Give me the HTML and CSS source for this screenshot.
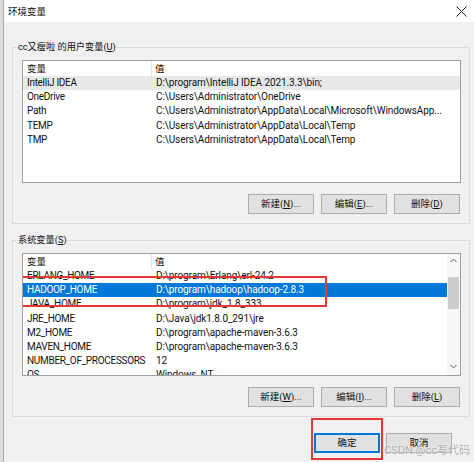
FILE: index.html
```html
<!DOCTYPE html>
<html lang="zh-CN">
<head>
    <meta charset="UTF-8">
    <title>环境变量</title>
    <link rel="stylesheet" href="styles.css">
</head>
<body>
    <div class="screen">
        <div class="edge"></div>
        <div class="dialog">
            <div class="titlebar">
                <span class="title">环境变量</span>
                <svg class="close" width="11" height="11" viewBox="0 0 11 11">
                    <path d="M0.5 0.5 L10.5 10.5 M10.5 0.5 L0.5 10.5" stroke="#222" stroke-width="1" fill="none"/>
                </svg>
            </div>

            <div class="content">
                <!-- 用户变量 -->
                <fieldset class="group">
                    <legend>cc又瘦啦 的用户变量(<u>U</u>)</legend>
                    <div class="list">
                        <div class="list-head">
                            <span class="col-name">变量</span>
                            <span class="col-value">值</span>
                        </div>
                        <div class="row row-soft"><span class="col-name">IntelliJ IDEA</span><span class="col-value">D:\program\IntelliJ IDEA 2021.3.3\bin;</span></div>
                        <div class="row"><span class="col-name">OneDrive</span><span class="col-value">C:\Users\Administrator\OneDrive</span></div>
                        <div class="row"><span class="col-name">Path</span><span class="col-value">C:\Users\Administrator\AppData\Local\Microsoft\WindowsApp...</span></div>
                        <div class="row"><span class="col-name">TEMP</span><span class="col-value">C:\Users\Administrator\AppData\Local\Temp</span></div>
                        <div class="row"><span class="col-name">TMP</span><span class="col-value">C:\Users\Administrator\AppData\Local\Temp</span></div>
                    </div>
                    <div class="buttons">
                        <button class="btn">新建(<u>N</u>)...</button>
                        <button class="btn">编辑(<u>E</u>)...</button>
                        <button class="btn">删除(<u>D</u>)</button>
                    </div>
                </fieldset>

                <!-- 系统变量 -->
                <fieldset class="group group-sys">
                    <legend>系统变量(<u>S</u>)</legend>
                    <div class="list list-scroll">
                        <div class="list-head">
                            <span class="col-name">变量</span>
                            <span class="col-value">值</span>
                        </div>
                        <div class="row"><span class="col-name">ERLANG_HOME</span><span class="col-value">D:\program\Erlang\erl-24.2</span></div>
                        <div class="row row-active"><span class="col-name">HADOOP_HOME</span><span class="col-value">D:\program\hadoop\hadoop-2.8.3</span></div>
                        <div class="row"><span class="col-name">JAVA_HOME</span><span class="col-value">D:\program\jdk_1.8_333</span></div>
                        <div class="row"><span class="col-name">JRE_HOME</span><span class="col-value">D:\Java\jdk1.8.0_291\jre</span></div>
                        <div class="row"><span class="col-name">M2_HOME</span><span class="col-value">D:\program\apache-maven-3.6.3</span></div>
                        <div class="row"><span class="col-name">MAVEN_HOME</span><span class="col-value">D:\program\apache-maven-3.6.3</span></div>
                        <div class="row"><span class="col-name">NUMBER_OF_PROCESSORS</span><span class="col-value">12</span></div>
                        <div class="row"><span class="col-name">OS</span><span class="col-value">Windows_NT</span></div>

                        <div class="scrollbar">
                            <svg class="arrow" width="7" height="5" viewBox="0 0 7 5"><path d="M0.5 4 L3.5 1 L6.5 4" stroke="#606060" fill="none"/></svg>
                            <div class="thumb"></div>
                            <div class="track"></div>
                            <svg class="arrow arrow-down" width="7" height="5" viewBox="0 0 7 5"><path d="M0.5 1 L3.5 4 L6.5 1" stroke="#606060" fill="none"/></svg>
                        </div>
                        <div class="mark mark-row"></div>
                    </div>
                    <div class="buttons">
                        <button class="btn">新建(<u>W</u>)...</button>
                        <button class="btn">编辑(<u>I</u>)...</button>
                        <button class="btn">删除(<u>L</u>)</button>
                    </div>
                </fieldset>

                <div class="footer">
                    <div class="ok-wrap">
                        <button class="btn btn-default">确定</button>
                        <div class="mark mark-ok"></div>
                    </div>
                    <button class="btn">取消</button>
                </div>
            </div>
            <div class="watermark">CSDN @cc写代码</div>
        </div>
    </div>
</body>
</html>
```

FILE: styles.css
```css
body {
    margin: 0;
    background: #f0f0f0;
    font-family: Roboto, 'Noto Sans CJK SC', sans-serif;
    font-size: 10px;
    color: #111;
}

.screen {
    display: flex;
    height: 462px;
    overflow: hidden;
}

.edge {
    width: 3px;
    background: #dcdcdc;
    border-right: 1px solid #a8a8a8;
}

.dialog {
    flex: 1;
    display: flex;
    flex-direction: column;
    position: relative;
}

.titlebar {
    height: 22px;
    background: #fff;
    display: flex;
    align-items: center;
    justify-content: space-between;
    padding: 0 7px 0 4px;
}

.title {
    font-size: 9.5px;
}

.content {
    padding: 18px 4px 0 8px;
}

.group {
    margin: 0;
    padding: 6px 8px 9px 9px;
    border: 1px solid #dcdcdc;
    min-width: 0;
}

.group legend {
    padding: 0;
    margin-left: -4px;
    line-height: 14px;
    height: 14px;
    font-size: 9.2px;
}

.group-sys {
    margin-top: 9px;
}

.list {
    height: 121px;
    border: 1px solid #a0a0a0;
    background: #fff;
    overflow: hidden;
    position: relative;
}

.list-head,
.row {
    display: grid;
    grid-template-columns: 129px 291px;
    white-space: nowrap;
}

.list-head {
    height: 15px;
    line-height: 15px;
    font-size: 9.5px;
}

.list-head .col-name {
    border-right: 1px solid #e5e5e5;
}

.row {
    height: 14.2px;
    line-height: 14.2px;
}

.col-name,
.col-value {
    padding-left: 4px;
    overflow: hidden;
}

.row .col-name {
    letter-spacing: -0.3px;
}

.row .col-value {
    letter-spacing: -0.1px;
}

.list-head .col-value {
    padding-left: 3px;
}

.row-soft {
    background: #e8e8e8;
}

.row-active {
    background: #0078d7;
    color: #fff;
}

.scrollbar {
    position: absolute;
    top: 0;
    right: 0;
    bottom: 0;
    width: 13px;
    background: #f7f7f7;
    display: flex;
    flex-direction: column;
    align-items: center;
}

.arrow {
    margin-top: 4px;
}

.arrow-down {
    margin: 0 0 6px;
}

.thumb {
    width: 11px;
    height: 32px;
    margin-top: 14px;
    background: #cdcdcd;
}

.track {
    flex: 1;
}

.buttons {
    display: flex;
    justify-content: flex-end;
    gap: 7px;
    margin-top: 11px;
    padding-right: 1px;
}

.btn {
    width: 66px;
    height: 20px;
    padding: 0;
    font-family: inherit;
    font-size: 9.5px;
    color: #111;
    background: #e1e1e1;
    border: 1px solid #adadad;
    line-height: 16px;
}

.btn u {
    text-decoration-thickness: 1px;
}

.btn-default {
    border: 2px solid #0078d7;
}

.footer {
    display: flex;
    justify-content: flex-end;
    gap: 6px;
    margin-top: 16px;
    padding-right: 18px;
}

.ok-wrap {
    position: relative;
}

.mark {
    position: absolute;
    border: 2px solid #e53935;
    pointer-events: none;
}

.mark-row {
    left: -8px;
    top: 22px;
    width: 308px;
    height: 27px;
}

.mark-ok {
    left: -3px;
    top: -15px;
    width: 68px;
    height: 38px;
}

.watermark {
    position: absolute;
    right: 4px;
    bottom: 5px;
    font-size: 11px;
    color: rgba(150, 150, 150, 0.75);
    text-shadow: 0 0 2px #fff;
}
```
